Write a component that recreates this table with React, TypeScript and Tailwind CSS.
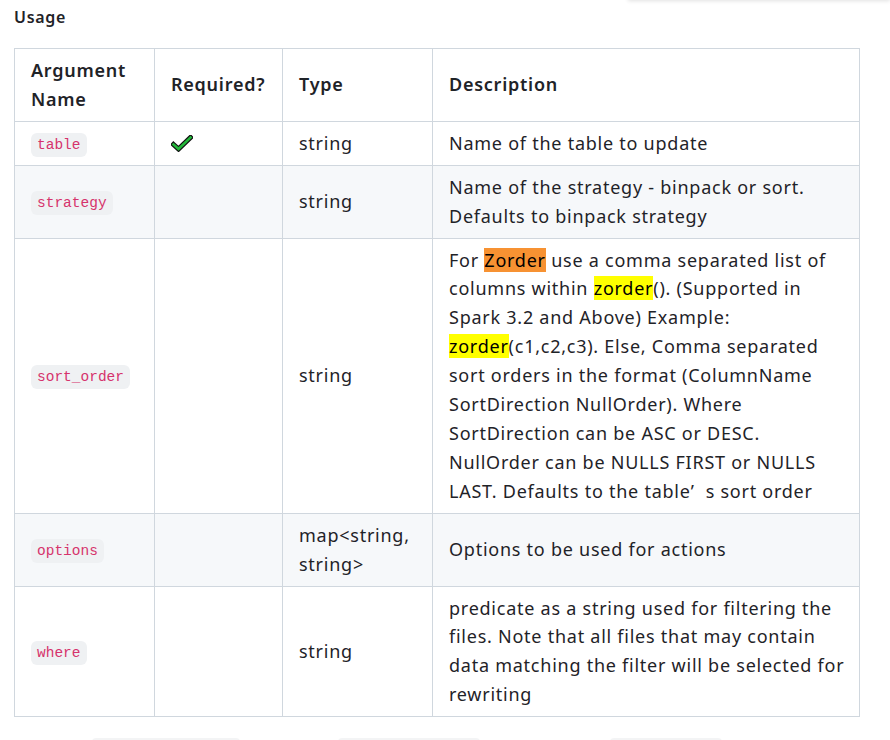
const rows = [
  { name: "table", required: true, type: "string", desc: "Name of the table to update", shaded: false },
  { name: "strategy", required: false, type: "string", desc: "Name of the strategy - binpack or sort. Defaults to binpack strategy", shaded: true },
  { name: "sort_order", required: false, type: "string", desc: "sort", shaded: false },
  { name: "options", required: false, type: "map<string, string>", desc: "Options to be used for actions", shaded: true },
  {
    name: "where",
    required: false,
    type: "string",
    desc: "predicate as a string used for filtering the files. Note that all files that may contain data matching the filter will be selected for rewriting",
    shaded: false,
  },
];

function Check() {
  return (
    <svg width="22" height="17" viewBox="0 0 22 17" className="block">
      <path d="M2.5 9.5 L7.5 14 L19.5 2.5" fill="none" stroke="#111" strokeWidth="5" strokeLinecap="square" strokeLinejoin="miter" />
      <path d="M2.5 9.5 L7.5 14 L19.5 2.5" fill="none" stroke="#22b83a" strokeWidth="2.6" strokeLinecap="square" strokeLinejoin="miter" />
    </svg>
  );
}

function SortDesc() {
  return (
    <>
      For <span className="bg-[#f79232] text-black">Zorder</span> use a comma separated list of columns within{" "}
      <span className="bg-[#ffff00] text-black">zorder</span>(). (Supported in Spark 3.2 and Above) Example:{" "}
      <span className="bg-[#ffff00] text-black">zorder</span>(c1,c2,c3). Else, Comma separated sort orders in the format
      (ColumnName SortDirection NullOrder). Where SortDirection can be ASC or DESC. NullOrder can be NULLS FIRST or NULLS
      LAST. Defaults to the table<span className="inline-block w-[15px]">’</span>s sort order
    </>
  );
}

export default function App() {
  return (
    <div className="relative w-[890px] h-[740px] overflow-hidden bg-white text-[#1f2328] font-['Noto_Sans',sans-serif]">
      {/* edge of a floating panel above */}
      <div className="absolute right-0 -top-4 h-4 w-[262px] bg-white shadow-[0_1px_4px_rgba(0,0,0,0.12)]" />

      <div className="px-[14px] pt-[5px]">
        <h3 className="text-[16px] leading-[24px] font-semibold tracking-[0.7px]">Usage</h3>

        <table className="mt-[19px] w-[846px] border-collapse text-[18px] leading-[28.9px] tracking-[0.75px]">
          <thead>
            <tr>
              <th className="w-[140px] border border-[#d0d7de] px-4 py-[7px] text-left font-semibold">Argument Name</th>
              <th className="w-[128px] border border-[#d0d7de] px-4 py-[7px] text-left font-semibold">Required?</th>
              <th className="w-[150px] border border-[#d0d7de] px-4 py-[7px] text-left font-semibold">Type</th>
              <th className="border border-[#d0d7de] py-[7px] pl-4 pr-2 text-left font-semibold">Description</th>
            </tr>
          </thead>
          <tbody>
            {rows.map((r) => (
              <tr key={r.name} className={r.shaded ? "bg-[#f6f8fa]" : "bg-white"}>
                <td className="border border-[#d0d7de] px-4 py-[7px]">
                  <code className="inline-block align-middle rounded-md bg-[#eff1f3] px-[6px] py-[3px] font-['Liberation_Mono',monospace] text-[14.5px] leading-[18px] tracking-normal text-[#d6336c]">
                    {r.name}
                  </code>
                </td>
                <td className="border border-[#d0d7de] px-4 py-[7px]">{r.required && <Check />}</td>
                <td className="border border-[#d0d7de] px-4 py-[7px]">{r.type}</td>
                <td className="border border-[#d0d7de] py-[7px] pl-4 pr-2">{r.desc === "sort" ? <SortDesc /> : r.desc}</td>
              </tr>
            ))}
          </tbody>
        </table>
      </div>

      {/* tops of the elements below */}
      <div className="mt-[21px] flex">
        <div className="ml-[92px] h-2 w-[148px] rounded-t bg-[#f3f4f5]" />
        <div className="ml-[98px] h-2 w-[142px] rounded-t bg-[#f3f4f5]" />
        <div className="ml-[130px] h-2 w-[112px] rounded-t bg-[#f3f4f5]" />
      </div>
    </div>
  );
}
